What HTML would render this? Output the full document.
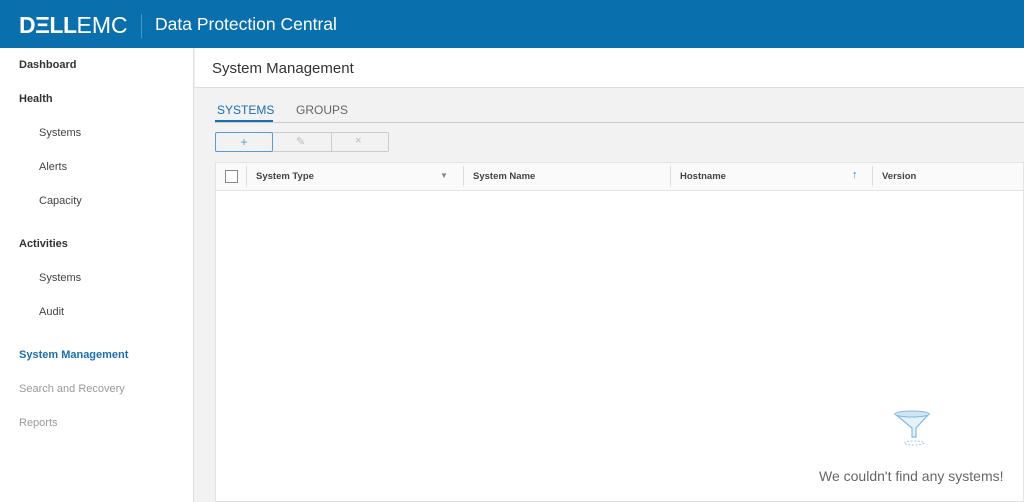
<!DOCTYPE html>
<html><head><style>
*{margin:0;padding:0;box-sizing:border-box}
body{width:1024px;height:502px;overflow:hidden;font-family:"Liberation Sans",sans-serif;background:#f2f2f2;position:relative}
.a{position:absolute;white-space:nowrap}
#hdr{left:0;top:0;width:1024px;height:48px;background:#0a6fad}
#side{left:0;top:48px;width:194px;height:454px;background:#fff;border-right:1px solid #ddd}
.n{font-size:11px;color:#333;font-weight:bold;left:19px}
.s{font-size:11px;color:#444;left:39px}
.th{font-size:9.5px;font-weight:bold;color:#444;top:171px}
.sep{top:166px;width:1px;height:20px;background:#ddd}
</style></head><body>
<div class="a" id="hdr"></div>
<div class="a" style="left:19px;top:12px;font-size:23px;color:#fff;font-weight:bold;letter-spacing:-0.5px">DΞLL<span style="font-weight:normal;letter-spacing:0">EMC</span></div>
<div class="a" style="left:141px;top:14px;width:1px;height:24px;background:#4d95c6"></div>
<div class="a" style="left:155px;top:14px;font-size:17.5px;color:#fff">Data Protection Central</div>
<div class="a" id="side"></div>
<div class="a n" style="top:59px">Dashboard</div>
<div class="a n" style="top:93px">Health</div>
<div class="a s" style="top:127px">Systems</div>
<div class="a s" style="top:161px">Alerts</div>
<div class="a s" style="top:195px">Capacity</div>
<div class="a n" style="top:238px">Activities</div>
<div class="a s" style="top:272px">Systems</div>
<div class="a s" style="top:306px">Audit</div>
<div class="a n" style="top:349px;color:#1a6fb0">System Management</div>
<div class="a" style="left:19px;top:383px;font-size:11px;color:#999">Search and Recovery</div>
<div class="a" style="left:19px;top:417px;font-size:11px;color:#999">Reports</div>
<div class="a" style="left:195px;top:48px;width:829px;height:40px;background:#fff;border-bottom:1px solid #ddd"></div>
<div class="a" style="left:212px;top:60px;font-size:15px;color:#333">System Management</div>
<div class="a" style="left:217px;top:103px;font-size:12px;color:#1a6fb0">SYSTEMS</div>
<div class="a" style="left:296px;top:103px;font-size:12px;color:#666">GROUPS</div>
<div class="a" style="left:215px;top:122px;width:809px;height:1px;background:#ccc"></div>
<div class="a" style="left:215px;top:120px;width:58px;height:2px;background:#1a6fb0"></div>
<div class="a" style="left:215px;top:132px;width:174px;height:20px;border:1px solid #ccc;border-radius:2px"></div>
<div class="a" style="left:215px;top:132px;width:58px;height:20px;border:1px solid #5a9ccc;border-radius:2px;text-align:center;font-size:12px;line-height:18px;color:#5a9ccc">+</div>
<div class="a" style="left:331px;top:132px;width:1px;height:20px;background:#ccc"></div>
<div class="a" style="left:296px;top:135px;font-size:11px;color:#bbb">✎</div>
<div class="a" style="left:355px;top:135px;font-size:11px;color:#bbb">×</div>
<div class="a" style="left:215px;top:162px;width:809px;height:340px;background:#fff;border:1px solid #e4e4e4"></div>
<div class="a" style="left:215px;top:162px;width:809px;height:29px;background:#fafafa;border:1px solid #e4e4e4"></div>
<div class="a" style="left:225px;top:170px;width:13px;height:13px;border:1px solid #888;background:#fff"></div>
<div class="a sep" style="left:246px"></div>
<div class="a th" style="left:256px">System Type</div>
<div class="a" style="left:440px;top:171px;font-size:8px;color:#888">▼</div>
<div class="a sep" style="left:463px"></div>
<div class="a th" style="left:473px">System Name</div>
<div class="a sep" style="left:670px"></div>
<div class="a th" style="left:680px">Hostname</div>
<div class="a" style="left:852px;top:169px;font-size:11px;color:#1a8fd0">↑</div>
<div class="a sep" style="left:872px"></div>
<div class="a th" style="left:882px">Version</div>
<svg class="a" style="left:893px;top:410px" width="40" height="36" viewBox="0 0 40 36"><path d="M2 4 Q19 -1 36 4 L23 18 L23 27 L19 27 L19 18 Z" fill="#e6f2fa" stroke="#7fb9e0" stroke-width="1.2"/><ellipse cx="19" cy="4" rx="17" ry="3" fill="#cfe5f4" stroke="#7fb9e0"/><ellipse cx="21" cy="33" rx="10" ry="2" fill="none" stroke="#9fcbe8" stroke-dasharray="2 1.5"/></svg>
<div class="a" style="left:819px;top:468px;font-size:14px;color:#666">We couldn't find any systems!</div>
</body></html>
